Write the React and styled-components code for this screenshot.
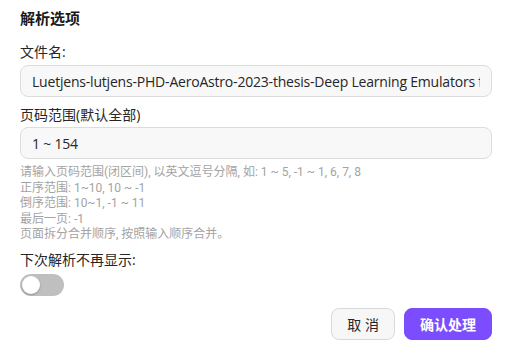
import { useState } from "react";
import styled, { createGlobalStyle } from "styled-components";

const GlobalStyle = createGlobalStyle`
  body {
    margin: 0;
    background: #ffffff;
    font-family: "Open Sans", "Noto Sans CJK SC", sans-serif;
    color: #1f1f1f;
  }
`;

const Panel = styled.div`
  width: 505px;
  height: 348px;
  box-sizing: border-box;
  padding: 8px 13px 0 20px;
  display: flex;
  flex-direction: column;
`;

const Title = styled.div`
  font-size: 15px;
  font-weight: 700;
  line-height: 20px;
  color: #1a1a1a;
`;

const Label = styled.div`
  font-size: 14px;
  line-height: 20px;
  color: #262626;
  margin-top: ${({ $gap }) => $gap ?? 8}px;
  margin-bottom: ${({ $after }) => $after ?? 3}px;
`;

const Input = styled.input`
  box-sizing: border-box;
  width: 100%;
  height: 32px;
  padding: 0 11px;
  border: 1px solid #dcdcdc;
  border-radius: 8px;
  background: #f8f8f8;
  font-family: "Open Sans", "Noto Sans CJK SC", sans-serif;
  font-size: 14px;
  letter-spacing: -0.2px;
  color: #262626;
  outline: none;
`;

const Help = styled.div`
  margin-top: 6px;
  font-family: Roboto, "Noto Sans CJK SC", sans-serif;
  font-size: 12px;
  line-height: 15.5px;
  color: #a3a3a3;
`;

const Switch = styled.button`
  width: 44px;
  height: 22px;
  padding: 0;
  border: none;
  border-radius: 11px;
  background: ${({ $on }) => ($on ? "#7c4dff" : "#bfbfbf")};
  position: relative;
  cursor: pointer;

  &::after {
    content: "";
    position: absolute;
    top: 2px;
    left: ${({ $on }) => ($on ? "24px" : "2px")};
    width: 18px;
    height: 18px;
    border-radius: 50%;
    background: #ffffff;
    box-shadow: 0 1px 2px rgba(0, 0, 0, 0.25);
  }
`;

const Footer = styled.div`
  display: flex;
  justify-content: flex-end;
  gap: 9px;
  margin-top: 12px;
`;

const Button = styled.button`
  height: 32px;
  padding: 0 15px;
  border-radius: 8px;
  font-family: "Open Sans", "Noto Sans CJK SC", sans-serif;
  font-size: 14px;
  cursor: pointer;
  border: 1px solid ${({ $primary }) => ($primary ? "#7c4dff" : "#d9d9d9")};
  background: ${({ $primary }) => ($primary ? "#7c4dff" : "#f7f7f7")};
  color: ${({ $primary }) => ($primary ? "#ffffff" : "#262626")};
  font-weight: ${({ $primary }) => ($primary ? 700 : 400)};
`;

function App() {
  const [on, setOn] = useState(false);

  return (
    <Panel>
      <GlobalStyle />
      <Title>解析选项</Title>
      <Label $gap={14}>文件名:</Label>
      <Input
        readOnly
        value="Luetjens-lutjens-PHD-AeroAstro-2023-thesis-Deep Learning Emulators for Accelerated Climate Projections"
      />
      <Label $after={2}>页码范围(默认全部)</Label>
      <Input readOnly value="1 ~ 154" />
      <Help>
        请输入页码范围(闭区间), 以英文逗号分隔, 如: 1 ~ 5, -1 ~ 1, 6, 7, 8
        <br />
        正序范围: 1~10, 10 ~ -1
        <br />
        倒序范围: 10~1, -1 ~ 11
        <br />
        最后一页: -1
        <br />
        页面拆分合并顺序, 按照输入顺序合并。
      </Help>
      <Label $gap={7} $after={4}>
        下次解析不再显示:
      </Label>
      <Switch $on={on} onClick={() => setOn(!on)} />
      <Footer>
        <Button>取 消</Button>
        <Button $primary>确认处理</Button>
      </Footer>
    </Panel>
  );
}

export default App;
